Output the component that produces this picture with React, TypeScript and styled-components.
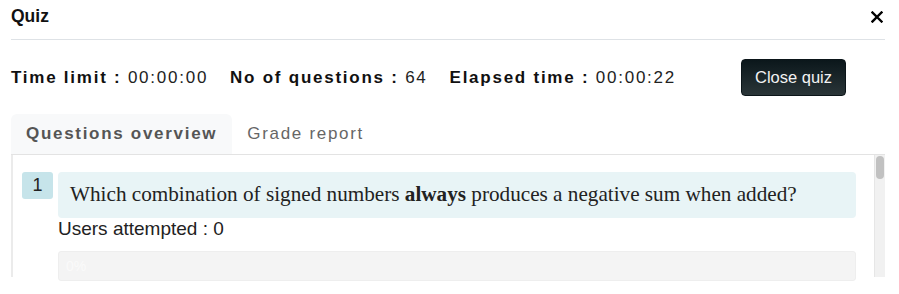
import React from "react";
import styled, { createGlobalStyle } from "styled-components";

const GlobalStyle = createGlobalStyle`
  * { box-sizing: border-box; }
  body {
    margin: 0;
    background: #fff;
    font-family: "Liberation Sans", Arial, sans-serif;
    color: #212529;
  }
`;

const Modal = styled.div`
  width: 899px;
  height: 294px;
  padding: 0 14px 0 11px;
  overflow: hidden;
`;

const Header = styled.div`
  display: flex;
  align-items: center;
  justify-content: space-between;
  height: 40px;
  padding-bottom: 6px;
  border-bottom: 1px solid #dee2e6;
`;

const Title = styled.h5`
  margin: 0;
  font-size: 17.5px;
  font-weight: 700;
  color: #111;
`;

const CloseX = styled.button`
  border: 0;
  background: none;
  padding: 0;
  margin-right: 2px;
  display: flex;
  cursor: pointer;
`;

const InfoRow = styled.div`
  display: flex;
  align-items: center;
  height: 72px;
  padding-top: 3px;
`;

const Stat = styled.span`
  font-size: 17px;
  letter-spacing: 1.75px;
  color: #222;
  margin-right: 22px;
  white-space: nowrap;
`;

const Label = styled.b`
  font-weight: 700;
  color: #111;
`;

const CloseButton = styled.button`
  margin-left: auto;
  margin-right: 39px;
  width: 105px;
  height: 37px;
  border: 1px solid #0b1519;
  border-radius: 4px;
  background: linear-gradient(#0b171b, #2a3538);
  color: #f2f2f2;
  font-family: "Liberation Sans", Arial, sans-serif;
  font-size: 16.5px;
`;

const Tabs = styled.div`
  display: flex;
  height: 43px;
  align-items: flex-end;
  border-bottom: 1px solid #e3e3e3;
`;

const Tab = styled.div<{ $active?: boolean }>`
  height: 40px;
  padding: 0 15px;
  display: flex;
  align-items: center;
  font-size: 17px;
  letter-spacing: 1.7px;
  font-weight: ${({ $active }) => ($active ? 700 : 400)};
  color: ${({ $active }) => ($active ? "#555" : "#666")};
  background: ${({ $active }) => ($active ? "#f8f9fa" : "transparent")};
  border-radius: 6px 6px 0 0;
`;

const Panel = styled.div`
  display: flex;
  height: 122px;
  border-left: 2px solid #ebebeb;
`;

const Scroll = styled.div`
  flex: 1;
  padding: 17px 18px 0 9px;
`;

const QuestionRow = styled.div`
  display: flex;
  gap: 5px;
`;

const Num = styled.div`
  width: 31px;
  height: 27px;
  border-radius: 3px;
  background: #c6e4ea;
  color: #222;
  font-size: 18px;
  display: flex;
  align-items: center;
  justify-content: center;
`;

const Body = styled.div`
  flex: 1;
`;

const Question = styled.div`
  height: 46px;
  background: #e8f4f6;
  border-radius: 4px;
  padding: 10px 12px 0;
  font-family: "Liberation Serif", "Times New Roman", serif;
  font-size: 21.2px;
  line-height: 1.2;
  color: #222;
`;

const Attempted = styled.div`
  margin-top: 0;
  font-size: 19px;
  line-height: 22px;
  color: #222;
`;

const Progress = styled.div`
  margin-top: 11px;
  height: 30px;
  background: #f4f4f4;
  border: 1px solid #eeeeee;
  border-radius: 3px;
  padding: 6px 7px;
  font-size: 14px;
  color: #fafafa;
`;

const ScrollTrack = styled.div`
  width: 11px;
  background: #f1f1f1;
  border-left: 1px solid #e6e6e6;
  padding: 1px 1px;
`;

const Thumb = styled.div`
  height: 23px;
  border-radius: 4px;
  background: #c1c1c1;
`;

export default function App() {
  return (
    <>
      <GlobalStyle />
      <Modal>
        <Header>
          <Title>Quiz</Title>
          <CloseX aria-label="close">
            <svg width="12" height="12" viewBox="0 0 12 12">
              <path d="M1.5 1.5 L10.5 10.5 M10.5 1.5 L1.5 10.5" stroke="#000" strokeWidth="2.4" strokeLinecap="square" />
            </svg>
          </CloseX>
        </Header>
        <InfoRow>
          <Stat><Label>Time limit :</Label> 00:00:00</Stat>
          <Stat><Label>No of questions :</Label> 64</Stat>
          <Stat><Label>Elapsed time :</Label> 00:00:22</Stat>
          <CloseButton>Close quiz</CloseButton>
        </InfoRow>
        <Tabs>
          <Tab $active>Questions overview</Tab>
          <Tab>Grade report</Tab>
        </Tabs>
        <Panel>
          <Scroll>
            <QuestionRow>
              <Num>1</Num>
              <Body>
                <Question>
                  Which combination of signed numbers <b>always</b> produces a negative sum when added?
                </Question>
                <Attempted>Users attempted : 0</Attempted>
                <Progress>0%</Progress>
              </Body>
            </QuestionRow>
          </Scroll>
          <ScrollTrack>
            <Thumb />
          </ScrollTrack>
        </Panel>
      </Modal>
    </>
  );
}
